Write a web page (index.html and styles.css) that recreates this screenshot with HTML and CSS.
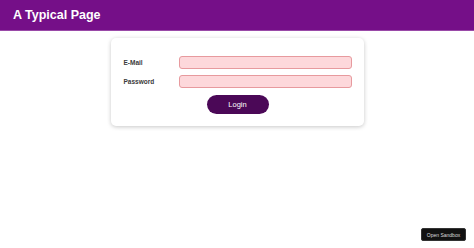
FILE: index.html
```html
<!DOCTYPE html>
<html>
<head>
<meta charset="utf-8">
<link rel="stylesheet" href="styles.css">
</head>
<body>
<header class="header"><h1 class="title">A Typical Page</h1></header>
<main class="main">
  <form class="card">
    <div class="row">
      <label class="label">E-Mail</label>
      <input class="input" type="text">
    </div>
    <div class="row">
      <label class="label">Password</label>
      <input class="input" type="password">
    </div>
    <div class="actions">
      <button class="login" type="button">Login</button>
    </div>
  </form>
</main>
<button class="sandbox" type="button">Open Sandbox</button>
</body>
</html>
```
FILE: styles.css
```css
html, body {
  margin: 0;
  padding: 0;
  background: #ffffff;
  font-family: "Liberation Sans", Arial, sans-serif;
}
body {
  width: 474px;
  height: 248px;
  position: relative;
  overflow: hidden;
}
.header {
  height: 31px;
  background: #750f88;
  border-bottom: 1px solid #9a4aa8;
  box-sizing: border-box;
  display: flex;
  align-items: center;
  padding-left: 13px;
}
.title {
  margin: 0;
  color: #ffffff;
  font-size: 12.5px;
  font-weight: bold;
}
.main {
  display: flex;
  justify-content: center;
  padding-top: 7px;
}
.card {
  width: 253px;
  height: 88px;
  box-sizing: border-box;
  margin: 0;
  padding: 18px 12px 12px 13px;
  background: #fff;
  border-radius: 5px;
  box-shadow: 0 1px 4px rgba(0,0,0,0.22);
  display: flex;
  flex-direction: column;
  gap: 6px;
}
.row {
  display: flex;
  align-items: center;
  height: 13px;
}
.label {
  flex: 0 0 55px;
  font-size: 6.5px;
  font-weight: bold;
  color: #3a3a3a;
}
.input {
  flex: 1 1 0;
  min-width: 0;
  width: 0;
  height: 13px;
  box-sizing: border-box;
  margin: 0;
  padding: 0 4px;
  background: #fdd8db;
  border: 1px solid #e79a9e;
  border-radius: 3px;
  outline: none;
}
.actions {
  display: flex;
  justify-content: center;
  padding-top: 1px;
}
.login {
  width: 62px;
  height: 19px;
  border: none;
  border-radius: 10px;
  background: #4b0857;
  color: #fff;
  font-family: "Liberation Sans", Arial, sans-serif;
  font-size: 7.5px;
  padding: 0;
}
.sandbox {
  position: absolute;
  left: 421px;
  top: 228px;
  width: 45px;
  height: 13px;
  padding: 0;
  border: 1px solid #333;
  border-radius: 2px;
  background: #111;
  color: #ddd;
  font-family: "Liberation Sans", Arial, sans-serif;
  font-size: 5px;
}
```
